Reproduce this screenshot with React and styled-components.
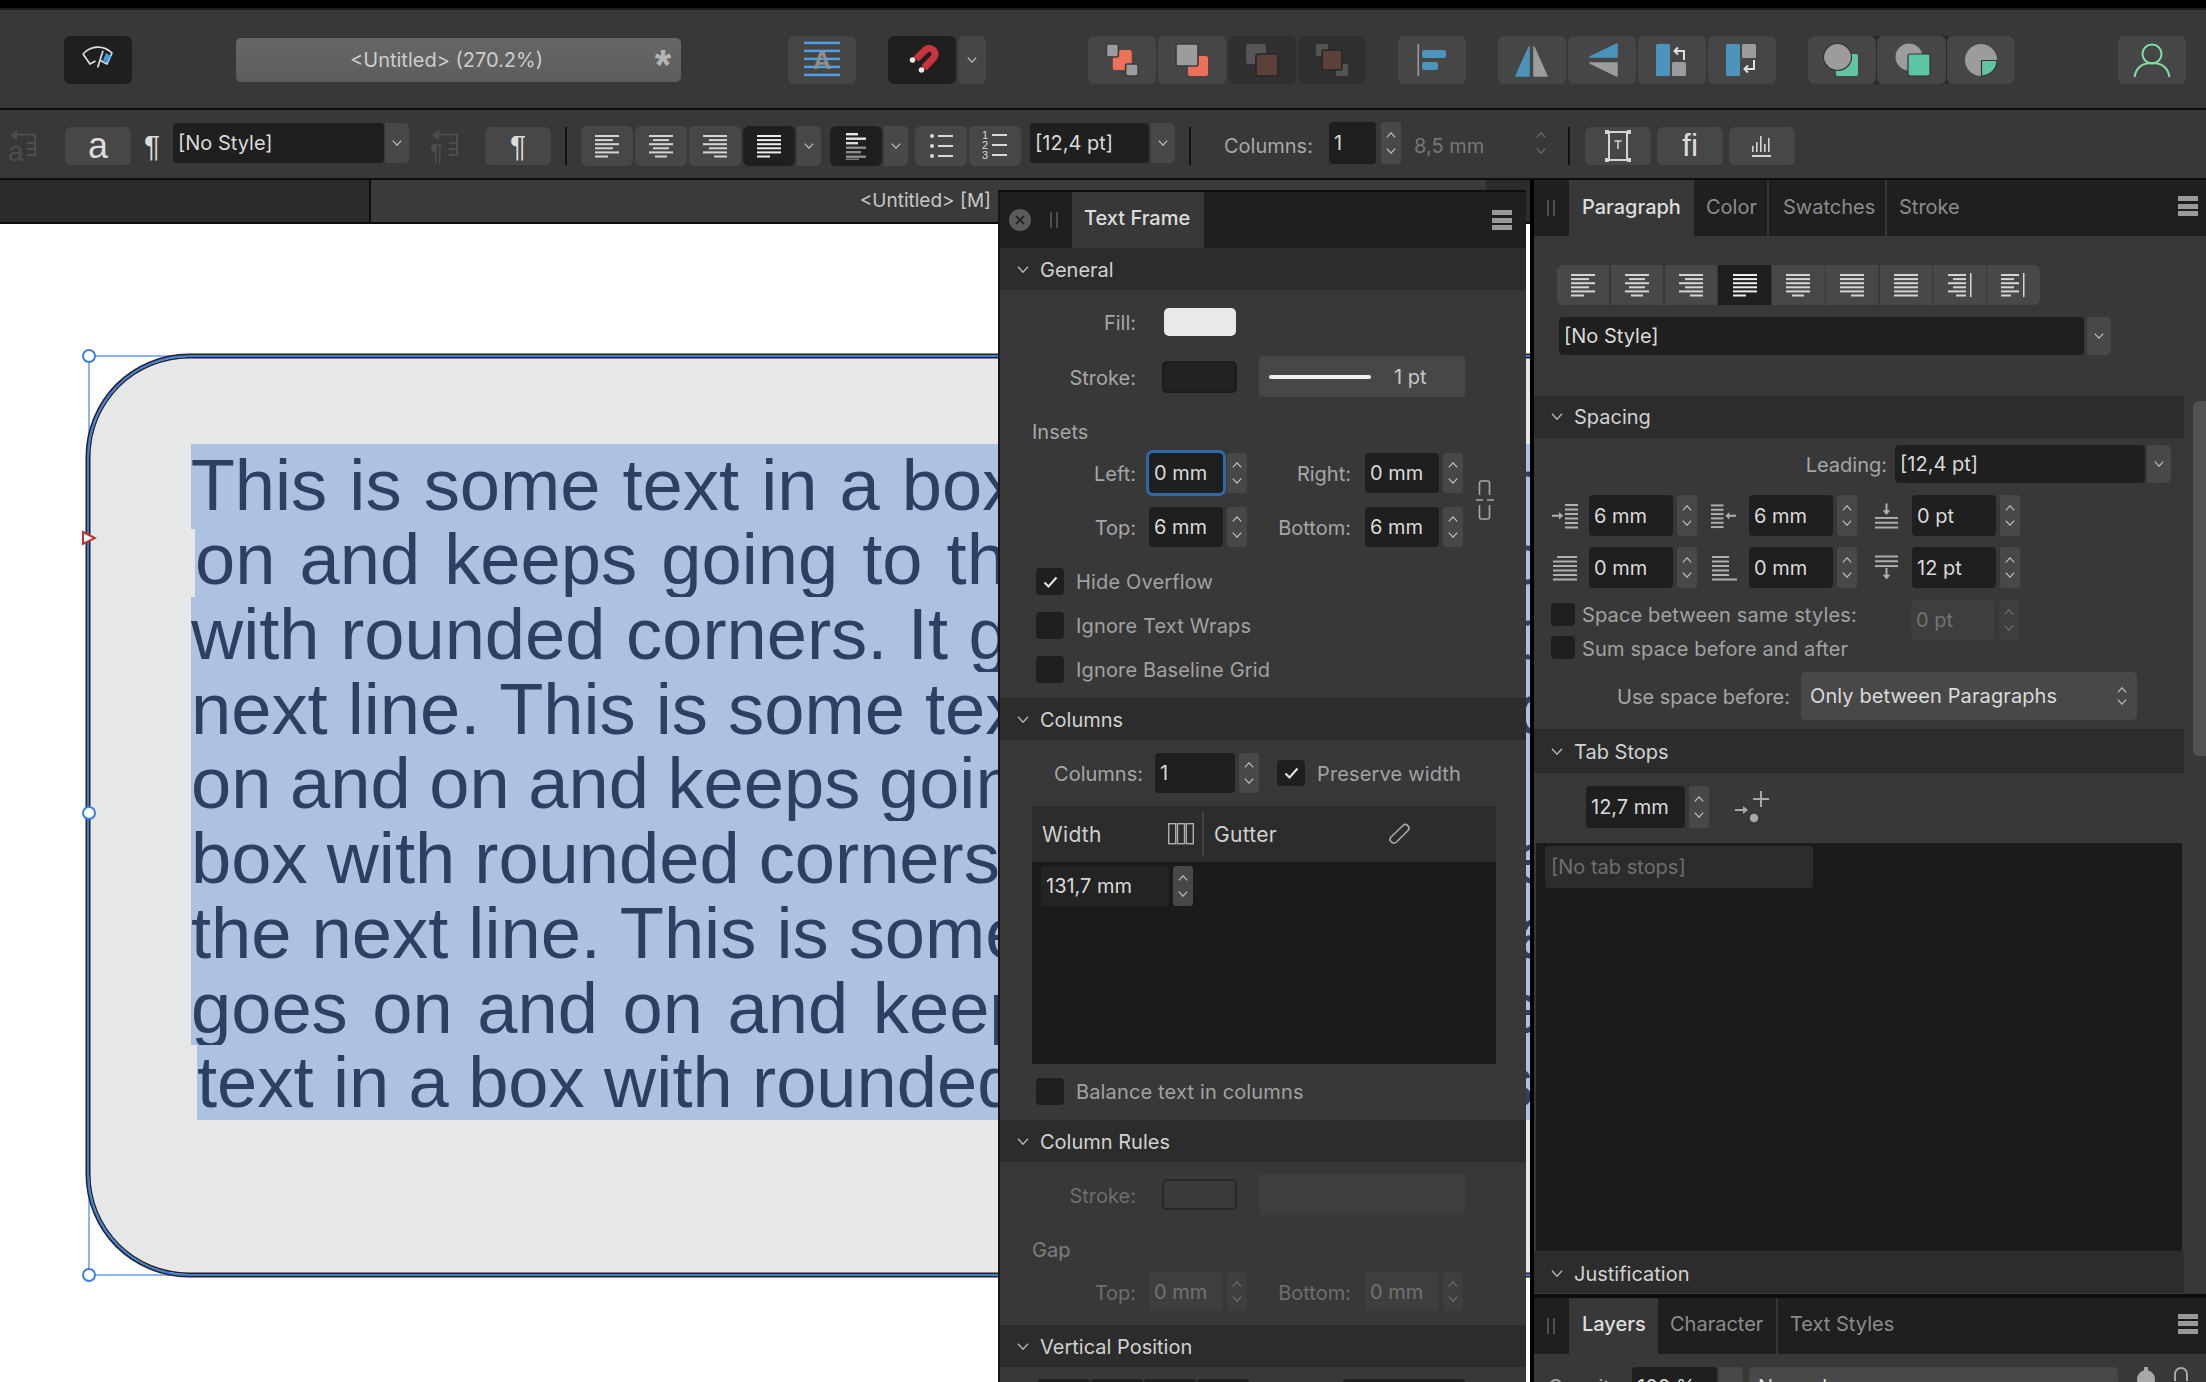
import * as React from "react";
import styled, { createGlobalStyle, css } from "styled-components";

const Global = createGlobalStyle`
  html, body { margin: 0; padding: 0; background: #000; }
  body { width: 2206px; height: 1382px; overflow: hidden; font-family: Inter, "Liberation Sans", sans-serif; }
  * { box-sizing: border-box; }
`;

const ml = css`margin-left: ${(p) => p.$ml || 0}px;`;

const Page = styled.div`
  width: 2206px;
  height: 1382px;
  display: flex;
  flex-direction: column;
  overflow: hidden;
  padding-top: 8px;
  background: #000;
`;

/* ---------- top toolbars ---------- */

const TopBar = styled.div`
  height: 102px;
  flex: none;
  display: flex;
  align-items: flex-start;
  padding-top: 26px;
  background: #383838;
  border-top: 2px solid #1c1c1c;
  border-bottom: 2px solid #0e0e0e;
`;

const ToolBtn = styled.div`
  ${ml}
  width: ${(p) => p.$w || 68}px;
  height: 48px;
  flex: none;
  display: flex;
  align-items: center;
  justify-content: center;
  border-radius: 6px;
  color: #c4c4c4;
  background: ${(p) => (p.$tone === "dark" ? "#1f1f1f" : p.$tone === "dim" ? "#303030" : "#464646")};
`;

const TitleBox = styled.div`
  ${ml}
  position: relative;
  width: 445px;
  height: 44px;
  flex: none;
  margin-top: 2px;
  display: flex;
  align-items: center;
  justify-content: center;
  padding-right: 24px;
  border-radius: 5px;
  background: linear-gradient(#676767, #5c5c5c);
  color: #cdcdcd;
  font-size: 20px;
`;

const Star = styled.span`
  position: absolute;
  right: 10px;
  top: 8px;
  color: #b5b5b5;
  font-size: 42px;
  font-weight: 700;
  line-height: 38px;
  font-family: "Liberation Sans", sans-serif;
`;

const BoolGroup = styled.div`
  ${ml}
  display: flex;
  flex: none;
  gap: 1px;
  border-radius: 6px;
  overflow: hidden;
  background: #2a2a2a;
`;

const ContextBar = styled.div`
  height: 70px;
  flex: none;
  display: flex;
  align-items: center;
  padding-top: 3px;
  background: #383838;
  border-bottom: 2px solid #0e0e0e;
  color: #d0d0d0;
`;

const CtxBtn = styled.div`
  ${ml}
  width: ${(p) => p.$w || 52}px;
  height: ${(p) => p.$h || 40}px;
  flex: none;
  display: flex;
  align-items: center;
  justify-content: center;
  border-radius: 6px;
  background: ${(p) => (p.$dark ? "#1f1f1f" : "#474747")};
  color: #dcdcdc;
  font-size: ${(p) => p.$fs || 20}px;
  font-family: "Liberation Sans", sans-serif;
`;

const Pilcrow = styled.span`
  ${ml}
  width: ${(p) => p.$w || "auto"};
  flex: none;
  color: #dcdcdc;
  font-size: 30px;
  font-family: "Liberation Sans", sans-serif;
`;

const Sep = styled.div`
  ${ml}
  width: 2px;
  height: 38px;
  flex: none;
  background: #111;
`;

const BarText = styled.span`
  ${ml}
  flex: none;
  width: ${(p) => (p.$w ? `${p.$w}px` : "auto")};
  line-height: ${(p) => p.$lh || "normal"};
  color: ${(p) => p.$c || "#a8a8a8"};
  font-size: 20px;
`;

const IconSlot = styled.div`
  ${ml}
  flex: none;
  display: flex;
  align-items: center;
`;

/* ---------- shared controls ---------- */

const Field = styled.div`
  ${ml}
  width: ${(p) => p.$w}px;
  height: ${(p) => p.$h || 40}px;
  flex: none;
  display: flex;
  align-items: center;
  padding-left: 5px;
  border-radius: 4px;
  font-size: 20px;
  white-space: nowrap;
  background: ${(p) => (p.$off ? "#3e3e3e" : p.$bg || "#1f1f1f")};
  color: ${(p) => (p.$off ? "#727272" : "#dadada")};
  ${(p) => p.$focus && "outline: 3px solid #2f6aa8; outline-offset: 0;"}
  ${(p) => p.$up && "margin-bottom: 5px;"}
`;

const Arrows = styled.div`
  ${ml}
  width: ${(p) => p.$w || 20}px;
  height: ${(p) => p.$h || 40}px;
  flex: none;
  display: flex;
  flex-direction: column;
  align-items: center;
  justify-content: space-evenly;
  border-radius: 3px;
  background: ${(p) => (p.$bare ? "transparent" : p.$off ? "#3e3e3e" : "#484848")};
  color: ${(p) => (p.$off ? "#6f6f6f" : "#c4c4c4")};
  ${(p) => p.$up && "margin-bottom: 5px;"}
`;

const DropBtn = styled.div`
  ${ml}
  width: ${(p) => p.$w || 24}px;
  height: ${(p) => p.$h || 40}px;
  flex: none;
  display: flex;
  align-items: center;
  justify-content: center;
  border-radius: 0 5px 5px 0;
  background: #484848;
  color: #c4c4c4;
  ${(p) => p.$up && "margin-bottom: 5px;"}
`;

const Chev = ({ up, w = 10 }) => (
  <svg width={w} height={w * 0.6} viewBox="0 0 10 6" fill="none" stroke="currentColor" strokeWidth="1.1">
    <path d={up ? "M.8 5.4 5 .8l4.2 4.6" : "M.8.6 5 5.2 9.2.6"} />
  </svg>
);

const Stepper = (props) => (
  <Arrows {...props}>
    <Chev up />
    <Chev />
  </Arrows>
);

const Dropdown = (props) => (
  <DropBtn {...props}>
    <Chev />
  </DropBtn>
);

const Burger = styled.div`
  ${ml}
  width: 20px;
  height: 20px;
  flex: none;
  margin-left: auto;
  background: repeating-linear-gradient(#9a9a9a 0 5px, transparent 5px 7.5px);
`;

const Grip = styled.div`
  ${ml}
  width: 8px;
  height: 16px;
  flex: none;
  border-left: 2px solid #4f4f4f;
  border-right: 2px solid #4f4f4f;
`;

const TabRow = styled.div`
  height: 56px;
  flex: none;
  display: flex;
  align-items: stretch;
  padding-right: 8px;
  background: #1f1f1f;
`;

const GripCell = styled.div`
  width: 35px;
  flex: none;
  display: flex;
  align-items: center;
  padding-left: 13px;
`;

const Tab = styled.div`
  width: ${(p) => p.$w}px;
  flex: none;
  display: flex;
  align-items: center;
  padding-left: ${(p) => p.$pl || 13}px;
  padding-bottom: ${(p) => p.$pb ?? 3}px;
  font-size: 20px;
  font-weight: ${(p) => (p.$active ? 500 : 400)};
  background: ${(p) => (p.$active ? "#383838" : "transparent")};
  color: ${(p) => (p.$active ? "#dedede" : "#8c8c8c")};
  ${(p) => p.$line && "border-right: 2px solid #353535;"}
`;

const BurgerCell = styled.div`
  margin-left: auto;
  display: flex;
  align-items: center;
  padding-bottom: 4px;
`;

const SectionBar = styled.div`
  height: ${(p) => p.$h || 42}px;
  display: flex;
  align-items: center;
  gap: 11px;
  padding-left: ${(p) => p.$pl || 17}px;
  padding-top: ${(p) => p.$pt ?? 1}px;
  background: #2c2c2c;
  color: #d2d2d2;
  font-size: 20px;
  svg { color: #b8b8b8; }
`;

const Section = ({ title, ...rest }) => (
  <SectionBar {...rest}>
    <Chev w={12} />
    {title}
  </SectionBar>
);

const Label = styled.div`
  ${ml}
  width: ${(p) => p.$w}px;
  flex: none;
  padding-top: 2px;
  text-align: right;
  white-space: nowrap;
  font-size: 20px;
  color: ${(p) => (p.$off ? "#6e6e6e" : "#a6a6a6")};
`;

const Heading = styled.div`
  height: 24px;
  margin-top: ${(p) => p.$mt || 0}px;
  padding-left: 32px;
  font-size: 20px;
  line-height: 24px;
  color: ${(p) => (p.$off ? "#7e7e7e" : "#a6a6a6")};
`;

const Row = styled.div`
  ${ml}
  display: flex;
  align-items: ${(p) => p.$align || "center"};
  height: ${(p) => p.$h || 40}px;
  margin-top: ${(p) => p.$mt || 0}px;
`;

const CheckBox = styled.div`
  ${ml}
  width: ${(p) => p.$w || 28}px;
  height: ${(p) => p.$h || 27}px;
  flex: none;
  display: flex;
  align-items: center;
  justify-content: center;
  border-radius: 4px;
  background: #1f1f1f;
  color: #e8e8e8;
`;

const CheckText = styled.span`
  margin-left: ${(p) => p.$gap || 12}px;
  padding-top: 1px;
  font-size: 20px;
  letter-spacing: 0.15px;
  white-space: nowrap;
  color: #a2a2a2;
`;

const Tick = () => (
  <svg width="15" height="12" viewBox="0 0 15 12" fill="none" stroke="currentColor" strokeWidth="2">
    <path d="M1.5 6.5 5.5 10.5 13.5 1.5" />
  </svg>
);

/* ---------- document area ---------- */

const Body = styled.div`
  flex: 1;
  display: flex;
  min-height: 0;
`;

const Main = styled.div`
  position: relative;
  width: 1530px;
  flex: none;
  display: flex;
  flex-direction: column;
  overflow: hidden;
  margin-right: 4px;
`;

const DocTabs = styled.div`
  height: 44px;
  flex: none;
  display: flex;
  border-bottom: 2px solid #0e0e0e;
  font-size: 19px;
  color: #c8c8c8;
`;

const DocTabBlank = styled.div`
  width: ${(p) => p.$w}px;
  flex: none;
  background: #2b2b2b;
  ${(p) => p.$line && "border-right: 2px solid #0e0e0e;"}
`;

const DocTabActive = styled.div`
  flex: 1;
  padding: 9px 495px 0 0;
  text-align: right;
  background: #3a3a3a;
`;

const Canvas = styled.div`
  position: relative;
  z-index: 0;
  flex: 1;
  overflow: hidden;
  background: #fff;
`;

const BBox = styled.div`
  position: absolute;
  left: 88px;
  top: 131px;
  width: 200px;
  height: 921px;
  border: 2px solid #8fb4ee;
  border-right: 0;
`;

const Frame = styled.div`
  position: absolute;
  left: 87px;
  top: 131px;
  width: 1800px;
  height: 921px;
  border: 2px solid #3c7ee2;
  border-radius: 102px;
  background: #e6e7e7;
  box-shadow: 0 0 0 1.5px #222, inset 0 0 0 1.5px #222;
`;

const Handle = styled.div`
  position: absolute;
  left: 82px;
  top: ${(p) => p.$y - 7}px;
  width: 14px;
  height: 14px;
  border: 2.5px solid #3c7ee2;
  border-radius: 50%;
  background: #fff;
`;

const Flow = styled.svg`
  position: absolute;
  left: 81px;
  top: 306px;
`;

const TextBlock = styled.div`
  position: absolute;
  left: 0;
  top: 220px;
  display: flex;
  flex-direction: column;
  align-items: flex-start;
  font-family: "Liberation Sans", Arial, sans-serif;
  font-size: 72.3px;
  line-height: 74.7px;
  color: #2c4063;
`;

const TextLine = styled.div`
  margin-left: ${(p) => p.$x}px;
  white-space: pre;
  word-spacing: ${(p) => p.$ws || 0}px;
  background: #adc2e3;
  ${(p) => p.$first && "position: relative; z-index: 1; padding-top: 3.6px; padding-bottom: 7px; margin-bottom: -7px;"}
`;

/* ---------- floating text frame panel ---------- */

const FloatPanel = styled.div`
  position: absolute;
  z-index: 2;
  left: 998px;
  top: 10px;
  width: 528px;
  height: 1192px;
  overflow: hidden;
  border-top: 2px solid #0e0e0e;
  border-left: 2px solid #161616;
  background: #383838;
`;

const TitleRow = styled.div`
  height: 56px;
  display: flex;
  align-items: center;
  padding-right: 14px;
  background: #1f1f1f;
`;

const CloseDot = styled.div`
  margin-left: 9px;
  width: 22px;
  height: 22px;
  flex: none;
  display: flex;
  align-items: center;
  justify-content: center;
  border-radius: 50%;
  background: #5c5c5c;
  color: #262626;
`;

const TitleTab = styled.div`
  margin-left: 14px;
  width: 132px;
  height: 56px;
  flex: none;
  display: flex;
  align-items: center;
  padding: 0 0 4px 12px;
  background: #383838;
  color: #dedede;
  font-size: 20px;
  font-weight: 500;
`;

const Swatch = styled.div`
  ${ml}
  width: ${(p) => p.$w}px;
  height: ${(p) => p.$h}px;
  flex: none;
  border-radius: 5px;
  background: ${(p) => p.$bg};
  ${(p) => p.$bd && `border: 2px solid ${p.$bd};`}
`;

const StrokeBox = styled.div`
  margin-left: 22px;
  width: 206px;
  height: ${(p) => p.$h || 41}px;
  flex: none;
  display: flex;
  align-items: center;
  gap: 23px;
  padding-left: 10px;
  border-radius: 3px;
  background: ${(p) => p.$bg || "#474747"};
  color: #c8c8c8;
  font-size: 20px;
`;

const StrokeLine = styled.div`
  width: 102px;
  height: 4px;
  border-radius: 2px;
  background: #f2f2f2;
`;

const InsetWrap = styled.div`
  display: flex;
  align-items: center;
  margin-top: 9px;
`;

const InsetRows = styled.div`
  display: flex;
  flex-direction: column;
  gap: 14px;
`;

const ColTable = styled.div`
  margin: 13px 0 0 32px;
  width: 464px;
  background: #1b1b1b;
  height: 258px;
`;

const ColHead = styled.div`
  height: 56px;
  display: flex;
  align-items: center;
  background: #2c2c2c;
  color: #d0d0d0;
  font-size: 21px;
  letter-spacing: 0.3px;
`;

const ColTitle = styled.span`
  width: ${(p) => p.$w}px;
  flex: none;
  padding-left: 10px;
`;

const ColDivider = styled.div`
  width: 2px;
  height: 44px;
  margin-left: 8px;
  flex: none;
  background: #454545;
`;

const ColBody = styled.div`
  display: flex;
  padding: 4px 0 0 9px;
  gap: 4px;
`;

const SegRow = styled.div`
  display: flex;
  margin: 12px 0 0 38px;
`;

const SegBtn = styled.div`
  width: ${(p) => p.$w || 52}px;
  height: 40px;
  flex: none;
  margin-right: 1px;
  border-radius: 3px;
  background: ${(p) => (p.$bg ? p.$bg : "#1f1f1f")};
`;

/* ---------- right studio ---------- */

const Studio = styled.div`
  width: 672px;
  flex: none;
  display: flex;
  flex-direction: column;
  background: #383838;
`;

const Upper = styled.div`
  height: 1058px;
  flex: none;
  display: flex;
  overflow: hidden;
`;

const UpperColumn = styled.div`
  width: 650px;
  flex: none;
`;

const ScrollThumb = styled.div`
  margin: 165px 0 0 9px;
  width: 13px;
  height: 355px;
  flex: none;
  border-radius: 6px 0 0 6px;
  background: #525252;
`;

const AlignRow = styled.div`
  margin: 29px 0 0 23px;
  width: 483px;
  display: flex;
  gap: 1.4px;
  border-radius: 6px;
  overflow: hidden;
`;

const AlignCell = styled.div`
  width: 52.4px;
  height: 40px;
  flex: none;
  display: flex;
  align-items: center;
  justify-content: center;
  background: ${(p) => (p.$dark ? "#1f1f1f" : "#484848")};
`;

const ParaStyle = styled.div`
  display: flex;
  height: 38px;
  margin: 12px 0 41px 25px;
`;

const SelectBox = styled.div`
  ${ml}
  width: ${(p) => p.$w}px;
  height: ${(p) => p.$h || 48}px;
  flex: none;
  display: flex;
  align-items: center;
  justify-content: space-between;
  padding: 0 10px 0 9px;
  border-radius: 5px;
  background: #484848;
  color: #dadada;
  font-size: 20px;
  letter-spacing: 0.1px;
`;

const UpDown = styled.div`
  display: flex;
  flex-direction: column;
  gap: 6px;
  color: #c4c4c4;
`;

const SpaceRow = styled.div`
  display: flex;
  align-items: center;
  margin: ${(p) => p.$mt}px 0 0 17px;
`;

const GlyphBox = styled.div`
  ${ml}
  width: ${(p) => p.$w}px;
  flex: none;
  display: flex;
  justify-content: center;
`;

const OptionRow = styled.div`
  display: flex;
  align-items: flex-start;
  height: ${(p) => p.$h}px;
  margin: ${(p) => p.$mt}px 0 0 17px;
`;

const OptionCell = styled.div`
  width: 360px;
  flex: none;
  display: flex;
  align-items: center;
  padding-top: 2px;
`;

const StopsBody = styled.div`
  height: 70px;
  display: flex;
  align-items: flex-start;
  padding: 13px 0 0 52px;
`;

const StopsList = styled.div`
  height: 408px;
  margin-left: 2px;
  width: 646px;
  padding: 3px 9px;
  background: #1b1b1b;
`;

const StopsEmpty = styled.div`
  width: 268px;
  height: 42px;
  display: flex;
  align-items: center;
  padding-left: 6px;
  border-radius: 3px;
  background: #2c2c2c;
  color: #6f6f6f;
  font-size: 20px;
`;

const Divider = styled.div`
  height: 4px;
  flex: none;
  background: #0e0e0e;
`;

const LayerTools = styled.div`
  display: flex;
  align-items: flex-start;
  padding: 13px 0 0 14px;
  overflow: hidden;
  flex: 1;
  color: #dadada;
  font-size: 20px;
`;

/* ---------- drawings ---------- */

const alignPatterns = {
  left: [[0, 24], [0, 18], [0, 24], [0, 18], [0, 24], [0, 13]],
  center: [[0, 24], [4, 16], [0, 24], [4, 16], [0, 24], [6, 12]],
  right: [[0, 24], [6, 18], [0, 24], [6, 18], [0, 24], [11, 13]],
  justify: [[0, 24], [0, 24], [0, 24], [0, 24], [0, 24], [0, 13]],
  justifyCenter: [[0, 24], [0, 24], [0, 24], [0, 24], [0, 24], [6, 12]],
  justifyRight: [[0, 24], [0, 24], [0, 24], [0, 24], [0, 24], [11, 13]],
  justifyAll: [[0, 24], [0, 24], [0, 24], [0, 24], [0, 24], [0, 24]],
  spineIn: [[0, 18], [5, 13], [0, 18], [5, 13], [0, 18], [8, 10]],
  spineOut: [[0, 18], [0, 13], [0, 18], [0, 13], [0, 18], [0, 10]],
};

const AlignGlyph = ({ kind, color = "#d4d4d4" }) => (
  <svg width="26" height="24" viewBox="0 0 26 24" fill={color}>
    {alignPatterns[kind].map(([x, w], i) => (
      <rect key={i} x={x + 1} y={1 + i * 4.1} width={w} height="2" />
    ))}
    {kind === "spineIn" || kind === "spineOut" ? <rect x="23" y="0" width="1.5" height="24" /> : null}
  </svg>
);

const VAlignGlyph = () => (
  <svg width="26" height="28" viewBox="0 0 26 28">
    <rect x="3" y="1" width="12" height="2.4" fill="#e6e6e6" />
    <rect x="3" y="5.5" width="20" height="2.4" fill="#e6e6e6" />
    <rect x="3" y="10" width="12" height="2.4" fill="#dcdcdc" />
    <rect x="3" y="14.5" width="20" height="2.4" fill="#8c8c8c" />
    <rect x="3" y="19" width="15" height="2.4" fill="#8c8c8c" />
    <rect x="3" y="23.5" width="20" height="2.4" fill="#8c8c8c" />
    <rect x="3" y="26.5" width="13" height="1.5" fill="#777" />
  </svg>
);

const BulletGlyph = () => (
  <svg width="26" height="28" viewBox="0 0 26 28" fill="#d8d8d8">
    {[4, 14, 24].map((y) => (
      <g key={y}>
        <circle cx="4" cy={y} r="2" />
        <rect x="10" y={y - 1} width="15" height="2" />
      </g>
    ))}
  </svg>
);

const NumberGlyph = () => (
  <svg width="28" height="30" viewBox="0 0 28 30" fill="#d8d8d8">
    {[8, 18, 28].map((y, i) => (
      <g key={y}>
        <text x="1" y={y} fontSize="11" fontFamily="Liberation Sans">{i + 1}</text>
        <rect x="11" y={y - 5} width="15" height="2" />
      </g>
    ))}
  </svg>
);

const StyleGlyph = ({ letter, fs = 28 }) => (
  <svg width="32" height="36" viewBox="0 0 32 36" fill="#4d4d4d">
    <path d="M2 7 9 2v3.6h19V28h-2V7.6H9V12z" />
    <text x="0" y="33" fontSize={fs} fontFamily="Liberation Sans">{letter}</text>
    <rect x="19" y="14" width="7" height="2" />
    <rect x="19" y="20" width="7" height="2" />
    <rect x="19" y="26" width="7" height="2" />
  </svg>
);

const IndentGlyph = ({ kind }) => {
  const lines = [0, 1, 2, 3, 4, 5];
  if (kind === "in" || kind === "out") {
    const lineX = kind === "in" ? 14 : 1;
    return (
      <svg width="28" height="26" viewBox="0 0 28 26" fill="#b0b0b0">
        {lines.map((i) => <rect key={i} x={lineX} y={1 + i * 4.5} width="13" height="2" />)}
        {kind === "in" ? <path d="M1 11.8h7V9l4 3.8-4 3.8v-2.8H1z" /> : <path d="M27 11.8h-7V9l-4 3.8 4 3.8v-2.8h7z" />}
      </svg>
    );
  }
  if (kind === "first" || kind === "last") {
    return (
      <svg width="26" height="26" viewBox="0 0 26 26" fill="#b0b0b0">
        {lines.map((i) => (
          <rect
            key={i}
            x={kind === "last" && i < 5 ? 1 : kind === "first" && i === 0 ? 5 : 1}
            y={1 + i * 4.5}
            width={kind === "last" && i < 5 ? 17 : kind === "first" && i === 0 ? 20 : kind === "last" ? 25 : 24}
            height="2"
          />
        ))}
      </svg>
    );
  }
  return (
    <svg width="26" height="28" viewBox="0 0 26 28" fill="#b0b0b0">
      {kind === "before" ? (
        <>
          <path d="M12 1h2v7h3l-4 5-4-5h3z" />
          <rect x="1" y="15" width="24" height="2" />
          <rect x="1" y="20" width="24" height="2" />
          <rect x="1" y="25" width="24" height="2" />
        </>
      ) : (
        <>
          <rect x="1" y="1" width="24" height="2" />
          <rect x="1" y="6" width="24" height="2" />
          <rect x="1" y="11" width="24" height="2" />
          <path d="M12 14h2v7h3l-4 5-4-5h3z" />
        </>
      )}
    </svg>
  );
};

const Logo = () => (
  <svg width="68" height="48" viewBox="0 0 68 48" fill="none" stroke="#dedede" strokeWidth="1.7" strokeLinejoin="round">
    <path d="M19 18C27 9 40 9 48 17L43 28 36.5 24.5M19 18 26 28 31.5 25" />
    <path d="M33.7 31.5 39 14.7" />
    <path d="M39 24 42 17 47 20 43 27z" fill="#3d9fe6" stroke="none" />
  </svg>
);

const TextFlowIcon = () => (
  <svg width="68" height="48" viewBox="0 0 68 48">
    {[6.7, 14.7, 22.7, 30.7, 38.7].map((y) => (
      <rect key={y} x="16" y={y - 1} width="36" height="2.4" fill="#4ba3ee" />
    ))}
    <text x="34" y="33" textAnchor="middle" fontSize="25" fontWeight="700" fontFamily="Liberation Sans" fill="#8e8e8e">A</text>
  </svg>
);

const MagnetIcon = () => (
  <svg width="68" height="48" viewBox="0 0 68 48" fill="none">
    <path d="M28 23 38 13.5C43 9.5 50 16.5 46 21.5L36 32" stroke="#c9353f" strokeWidth="7" />
    <circle cx="24.5" cy="24" r="2.8" fill="#e8e8e8" />
    <circle cx="33.5" cy="34" r="2.8" fill="#e8e8e8" />
  </svg>
);

const Blocks = ({ items }) => (
  <svg width="68" height="48" viewBox="0 0 68 48">
    {items.map(([x, y, w, h, fill, edge], i) => (
      <rect key={i} x={x} y={y} width={w} height={h} rx="2" fill={fill} stroke={edge || "none"} strokeWidth={edge ? 1.6 : 0} />
    ))}
  </svg>
);

const OrderIcon = ({ kind }) => {
  const sets = {
    back: [[24.8, 14, 19, 20, "#ee7059"], [18.4, 8, 12, 13, "#9c9c9c", "#3a3a3a"], [37.6, 28, 12.5, 12, "#9c9c9c", "#3a3a3a"]],
    front: [[30, 20, 20, 20, "#ee7059"], [18, 8, 22, 22, "#9c9c9c", "#3a3a3a"]],
    fwd: [[18, 8, 20, 20, "#555"], [28, 18, 22, 22, "#5c403a", "#262626"]],
    bwd: [[18, 8, 12, 12, "#555"], [38, 28, 12, 12, "#555"], [24, 14, 20, 20, "#5c403a", "#262626"]],
  };
  return <Blocks items={sets[kind]} />;
};

const AlignTool = () => (
  <svg width="68" height="48" viewBox="0 0 68 48">
    <rect x="19.5" y="8" width="1.5" height="32" fill="#9c9c9c" />
    <rect x="24" y="14" width="24" height="8" rx="2" fill="#4d94bd" />
    <rect x="24" y="26" width="16" height="8" rx="2" fill="#4d94bd" />
  </svg>
);

const FlipH = () => (
  <svg width="68" height="48" viewBox="0 0 68 48" strokeLinejoin="round">
    <path d="M31 11V40H18z" fill="#4d94bd" stroke="#4d94bd" strokeWidth="1.5" />
    <path d="M36 11V40H49z" fill="#9c9c9c" stroke="#9c9c9c" strokeWidth="1.5" />
  </svg>
);

const FlipV = () => (
  <svg width="68" height="48" viewBox="0 0 68 48" strokeLinejoin="round">
    <path d="M49 8V21H22z" fill="#4d94bd" stroke="#4d94bd" strokeWidth="1.5" />
    <path d="M49 40V27H22z" fill="#9c9c9c" stroke="#9c9c9c" strokeWidth="1.5" />
  </svg>
);

const RotateA = () => (
  <svg width="68" height="48" viewBox="0 0 68 48" fill="none">
    <rect x="18" y="8" width="14" height="32" rx="1.5" fill="#4d94bd" />
    <rect x="34" y="26" width="14" height="14" rx="1.5" fill="#9c9c9c" />
    <path d="M46 24V15H37M40 11.5 36.5 15 40 18.5" stroke="#e0e0e0" strokeWidth="2" />
  </svg>
);

const RotateB = () => (
  <svg width="68" height="48" viewBox="0 0 68 48" fill="none">
    <rect x="18" y="8" width="14" height="32" rx="1.5" fill="#4d94bd" />
    <rect x="34" y="8" width="14" height="14" rx="1.5" fill="#9c9c9c" />
    <path d="M46 24V33H37M40 29.5 36.5 33 40 36.5" stroke="#e0e0e0" strokeWidth="2" />
  </svg>
);

const BoolAdd = () => (
  <svg width="68" height="48" viewBox="0 0 68 48">
    <rect x="28" y="18" width="22" height="22" rx="2" fill="#5fc3a5" />
    <ellipse cx="29.5" cy="21" rx="14" ry="13.5" fill="#9c9c9c" stroke="#333" strokeWidth="1.2" />
  </svg>
);

const BoolSub = () => (
  <svg width="68" height="48" viewBox="0 0 68 48">
    <ellipse cx="31" cy="21" rx="13.5" ry="13.5" fill="#9c9c9c" />
    <rect x="30" y="18" width="22" height="22" rx="2" fill="#5fc3a5" stroke="#333" strokeWidth="1.2" />
  </svg>
);

const BoolCut = () => (
  <svg width="68" height="48" viewBox="0 0 68 48">
    <ellipse cx="34" cy="24" rx="16" ry="16" fill="#9c9c9c" />
    <path d="M34.5 24.5H50C50 33 44 39 34.5 40z" fill="#5fc3a5" stroke="#333" strokeWidth="1.2" />
  </svg>
);

const UserIcon = () => (
  <svg width="68" height="48" viewBox="0 0 68 48" fill="none" stroke="#7de0a0" strokeWidth="2">
    <ellipse cx="34" cy="18" rx="9.5" ry="9.5" />
    <path d="M16.5 41C18 32 24 27 34 27s16 5 17.5 14" />
  </svg>
);

const FrameGlyph = () => (
  <svg width="28" height="34" viewBox="0 0 28 34" fill="none" stroke="#d4d4d4" strokeWidth="2">
    <path d="M5 3V31M23 3V31M3 3H25M3 31H25" />
    <rect x="1" y="1" width="4" height="4" fill="#d4d4d4" stroke="none" />
    <rect x="23" y="1" width="4" height="4" fill="#d4d4d4" stroke="none" />
    <rect x="1" y="29" width="4" height="4" fill="#d4d4d4" stroke="none" />
    <rect x="23" y="29" width="4" height="4" fill="#d4d4d4" stroke="none" />
    <path d="M10.5 12H17.5M14 12V20" strokeWidth="1.5" />
  </svg>
);

const ChartGlyph = () => (
  <svg width="22" height="24" viewBox="0 0 22 24" fill="#d4d4d4">
    {[[1, 12], [5, 8], [9, 2], [13, 10], [17, 4]].map(([x, y]) => (
      <rect key={x} x={x} y={y} width="1.6" height={18 - y} />
    ))}
    <rect x="1" y="21" width="19" height="2" />
  </svg>
);

const LinkGlyph = () => (
  <svg width="18" height="40" viewBox="0 0 18 40" fill="none" stroke="#a8a8a8" strokeWidth="1.6">
    <path d="M3.5 15V3a2 2 0 0 1 2-2h6a2 2 0 0 1 2 2v12M3.5 25v12a2 2 0 0 0 2 2h6a2 2 0 0 0 2-2V25" />
    <path d="M0 20h7M11 20h7" />
  </svg>
);

const ColumnsGlyph = () => (
  <svg width="26" height="22" viewBox="0 0 26 22" fill="none" stroke="#b0b0b0" strokeWidth="1.4">
    <rect x=".7" y=".7" width="7" height="20" />
    <rect x="9.5" y=".7" width="7" height="20" />
    <rect x="18.3" y=".7" width="7" height="20" />
  </svg>
);

const ClipGlyph = () => (
  <svg width="26" height="24" viewBox="0 0 26 24" fill="none" stroke="#a8a8a8" strokeWidth="1.6">
    <path d="M4 15 16 3.5c3-3 8 1.5 5 5L9.5 20C6 23 1 18.5 4 15z" />
  </svg>
);

const AddStopGlyph = () => (
  <svg width="36" height="42" viewBox="0 0 36 42" fill="#a8a8a8">
    <path d="M1 23h8v-3l5 4-5 4v-3H1z" />
    <circle cx="20" cy="32" r="4.2" />
    <rect x="26" y="5" width="2" height="16" />
    <rect x="19" y="12" width="16" height="2" />
  </svg>
);

const Spin = ({ value, w = 74, h = 40, off, focus, stepMl = 4, ...rest }) => (
  <>
    <Field $w={w} $h={h} $off={off} $focus={focus} {...rest}>{value}</Field>
    <Stepper $ml={stepMl} $h={h} $off={off} />
  </>
);

const textLines = [
  { x: 190.7, ws: 2, text: "This is some text in a box that goes on and on", first: true },
  { x: 195, ws: 4, text: "on and keeps going to the edge of the box and on" },
  { x: 191, ws: 0.5, text: "with rounded corners. It goes on and on to the end" },
  { x: 191, text: "next line. This is some text in a box that goes on" },
  { x: 191, ws: -1.5, text: "on and on and keeps going to the edge of the box" },
  { x: 191, ws: -1, text: "box with rounded corners. It goes on to the next" },
  { x: 191, text: "the next line. This is some text in a box that goes" },
  { x: 191, ws: 4.5, text: "goes on and on and keeps going to the edge of the" },
  { x: 197, ws: -0.7, text: "text in a box with rounded corners. It goes on and" },
];

export default () => (
  <Page>
    <Global />

    <TopBar>
      <ToolBtn $ml={64} $tone="dark"><Logo /></ToolBtn>
      <TitleBox $ml={104}>
        &lt;Untitled&gt; (270.2%)
        <Star>*</Star>
      </TitleBox>
      <ToolBtn $ml={107}><TextFlowIcon /></ToolBtn>
      <ToolBtn $ml={32} $tone="dark"><MagnetIcon /></ToolBtn>
      <ToolBtn $ml={2} $w={28}><Chev /></ToolBtn>
      <ToolBtn $ml={102}><OrderIcon kind="back" /></ToolBtn>
      <ToolBtn $ml={2}><OrderIcon kind="front" /></ToolBtn>
      <ToolBtn $ml={2} $tone="dim"><OrderIcon kind="fwd" /></ToolBtn>
      <ToolBtn $ml={2} $tone="dim"><OrderIcon kind="bwd" /></ToolBtn>
      <ToolBtn $ml={32}><AlignTool /></ToolBtn>
      <ToolBtn $ml={32}><FlipH /></ToolBtn>
      <ToolBtn $ml={2}><FlipV /></ToolBtn>
      <ToolBtn $ml={2}><RotateA /></ToolBtn>
      <ToolBtn $ml={2}><RotateB /></ToolBtn>
      <BoolGroup $ml={32}>
        <ToolBtn $w={68.4}><BoolAdd /></ToolBtn>
        <ToolBtn $w={68.4}><BoolSub /></ToolBtn>
        <ToolBtn $w={68.4}><BoolCut /></ToolBtn>
      </BoolGroup>
      <ToolBtn $ml={103}><UserIcon /></ToolBtn>
    </TopBar>

    <ContextBar>
      <IconSlot $ml={8}><StyleGlyph letter="a" /></IconSlot>
      <CtxBtn $ml={25} $w={66} $h={38} $fs={36}>a</CtxBtn>
      <Pilcrow $ml={13} $w="17px">¶</Pilcrow>
      <Field $ml={12} $w={211} $up>[No Style]</Field>
      <Dropdown $ml={1} $up />
      <IconSlot $ml={21}><StyleGlyph letter="¶" fs={24} /></IconSlot>
      <CtxBtn $ml={23} $w={66} $h={38} $fs={30}>¶</CtxBtn>
      <Sep $ml={14} />
      <CtxBtn $ml={14}><AlignGlyph kind="left" /></CtxBtn>
      <CtxBtn $ml={2}><AlignGlyph kind="center" /></CtxBtn>
      <CtxBtn $ml={2}><AlignGlyph kind="right" /></CtxBtn>
      <CtxBtn $ml={2} $dark><AlignGlyph kind="justify" color="#ececec" /></CtxBtn>
      <Dropdown $ml={2} />
      <CtxBtn $ml={9} $dark><VAlignGlyph /></CtxBtn>
      <Dropdown $ml={2} />
      <CtxBtn $ml={7}><BulletGlyph /></CtxBtn>
      <CtxBtn $ml={2}><NumberGlyph /></CtxBtn>
      <Field $ml={9} $w={119} $up>[12,4 pt]</Field>
      <Dropdown $ml={2} $up />
      <Sep $ml={14} />
      <BarText $ml={33} $w={90}>Columns:</BarText>
      <Field $ml={15} $w={47} $h={42} $up>1</Field>
      <Stepper $ml={5} $h={42} $up />
      <BarText $ml={13} $w={117} $c="#777">8,5 mm</BarText>
      <Stepper $bare $off $h={42} $up />
      <Sep $ml={17} />
      <CtxBtn $ml={15} $w={66} $h={38}><FrameGlyph /></CtxBtn>
      <CtxBtn $ml={6} $w={66} $h={38} $fs={32}>fi</CtxBtn>
      <CtxBtn $ml={6} $w={66} $h={38}><ChartGlyph /></CtxBtn>
    </ContextBar>

    <Body>
      <Main>
        <DocTabs>
          <DocTabBlank $w={371} $line />
          <DocTabActive>&lt;Untitled&gt; [M]</DocTabActive>
          <DocTabBlank $w={44} />
        </DocTabs>

        <Canvas>
          <BBox />
          <Frame />
          <TextBlock>
            {textLines.map((l, i) => (
              <TextLine key={i} $x={l.x} $ws={l.ws} $first={l.first}>{l.text}</TextLine>
            ))}
          </TextBlock>
          <Handle $y={132} />
          <Handle $y={589} />
          <Handle $y={1051} />
          <Flow width="16" height="16" viewBox="0 0 16 16">
            <path d="M2 2 14 8 2 14z" fill="#fff" stroke="#c0322c" strokeWidth="2" />
          </Flow>
        </Canvas>

        <FloatPanel>
          <TitleRow>
            <CloseDot>
              <svg width="10" height="10" viewBox="0 0 10 10" stroke="currentColor" strokeWidth="1.8">
                <path d="M1 1 9 9M9 1 1 9" />
              </svg>
            </CloseDot>
            <Grip $ml={19} />
            <TitleTab>Text Frame</TitleTab>
            <Burger />
          </TitleRow>

          <Section title="General" />
          <Row $mt={18} $h={28}>
            <Label $w={136}>Fill:</Label>
            <Swatch $ml={28} $w={72} $h={28} $bg="#e8e9e9" />
          </Row>
          <Row $mt={20} $h={41}>
            <Label $w={136}>Stroke:</Label>
            <Swatch $ml={26} $w={75} $h={32} $bg="#222" $bd="#1c1c1c" />
            <StrokeBox>
              <StrokeLine />
              1 pt
            </StrokeBox>
          </Row>
          <Heading $mt={23}>Insets</Heading>
          <InsetWrap>
            <InsetRows>
              <Row>
                <Label $w={136}>Left:</Label>
                <Spin value="0 mm" $ml={13} focus />
                <Label $w={104}>Right:</Label>
                <Spin value="0 mm" $ml={14} />
              </Row>
              <Row>
                <Label $w={136}>Top:</Label>
                <Spin value="6 mm" $ml={13} />
                <Label $w={104}>Bottom:</Label>
                <Spin value="6 mm" $ml={14} />
              </Row>
            </InsetRows>
            <IconSlot $ml={13}><LinkGlyph /></IconSlot>
          </InsetWrap>
          <Row $ml={36} $mt={21} $h={27}>
            <CheckBox><Tick /></CheckBox>
            <CheckText>Hide Overflow</CheckText>
          </Row>
          <Row $ml={36} $mt={17} $h={27}>
            <CheckBox />
            <CheckText>Ignore Text Wraps</CheckText>
          </Row>
          <Row $ml={36} $mt={17} $h={27}>
            <CheckBox />
            <CheckText>Ignore Baseline Grid</CheckText>
          </Row>
          <Row $h={15} />

          <Section title="Columns" />
          <Row $mt={13}>
            <Label $w={143}>Columns:</Label>
            <Spin value="1" $ml={12} w={80} />
            <CheckBox $ml={18} $h={26}><Tick /></CheckBox>
            <CheckText>Preserve width</CheckText>
          </Row>
          <ColTable>
            <ColHead>
              <ColTitle $w={136}>Width</ColTitle>
              <ColumnsGlyph />
              <ColDivider />
              <ColTitle $w={183}>Gutter</ColTitle>
              <ClipGlyph />
            </ColHead>
            <ColBody>
              <Field $w={128} $h={40} $bg="#232323">131,7 mm</Field>
              <Stepper $h={40} />
            </ColBody>
          </ColTable>
          <Row $ml={36} $mt={14} $h={27}>
            <CheckBox />
            <CheckText>Balance text in columns</CheckText>
          </Row>
          <Row $h={15} />

          <Section title="Column Rules" />
          <Row $mt={12} $h={41}>
            <Label $w={136} $off>Stroke:</Label>
            <Swatch $ml={26} $w={75} $h={31} $bg="#3a3a3a" $bd="#272727" />
            <StrokeBox $bg="#3e3e3e" />
          </Row>
          <Heading $mt={23} $off>Gap</Heading>
          <Row $mt={10} $h={39}>
            <Label $w={136} $off>Top:</Label>
            <Spin value="0 mm" $ml={13} h={39} off />
            <Label $w={104} $off>Bottom:</Label>
            <Spin value="0 mm" $ml={14} h={39} off />
          </Row>
          <Row $h={14} />

          <Section title="Vertical Position" />
          <SegRow>
            <SegBtn />
            <SegBtn />
            <SegBtn />
            <SegBtn />
            <SegBtn $w={92} $bg="transparent" />
            <SegBtn $w={122} />
          </SegRow>
        </FloatPanel>
      </Main>

      <Studio>
        <TabRow>
          <GripCell><Grip /></GripCell>
          <Tab $w={125} $active>Paragraph</Tab>
          <Tab $w={75} $pl={12} $line>Color</Tab>
          <Tab $w={118} $pl={14} $line>Swatches</Tab>
          <Tab $w={90} $pl={12}>Stroke</Tab>
          <BurgerCell><Burger /></BurgerCell>
        </TabRow>

        <Upper>
          <UpperColumn>
            <AlignRow>
              <AlignCell><AlignGlyph kind="left" /></AlignCell>
              <AlignCell><AlignGlyph kind="center" /></AlignCell>
              <AlignCell><AlignGlyph kind="right" /></AlignCell>
              <AlignCell $dark><AlignGlyph kind="justify" color="#ececec" /></AlignCell>
              <AlignCell><AlignGlyph kind="justifyCenter" /></AlignCell>
              <AlignCell><AlignGlyph kind="justifyRight" /></AlignCell>
              <AlignCell><AlignGlyph kind="justifyAll" /></AlignCell>
              <AlignCell><AlignGlyph kind="spineIn" /></AlignCell>
              <AlignCell><AlignGlyph kind="spineOut" /></AlignCell>
            </AlignRow>
            <ParaStyle>
              <Field $w={525} $h={38}>[No Style]</Field>
              <Dropdown $ml={3} $h={38} />
            </ParaStyle>

            <Section title="Spacing" $pt={0} />
            <Row $mt={7} $h={38}>
              <Label $w={353}>Leading:</Label>
              <Field $ml={8} $w={250} $h={38}>[12,4 pt]</Field>
              <Dropdown $ml={2} $h={38} />
            </Row>
            <SpaceRow $mt={12}>
              <GlyphBox $w={28}><IndentGlyph kind="in" /></GlyphBox>
              <Spin value="6 mm" $ml={10} w={84} h={41} />
              <GlyphBox $ml={13} $w={27}><IndentGlyph kind="out" /></GlyphBox>
              <Spin value="6 mm" $ml={12} w={84} h={41} />
              <GlyphBox $ml={17} $w={25}><IndentGlyph kind="before" /></GlyphBox>
              <Spin value="0 pt" $ml={13} w={84} h={41} />
            </SpaceRow>
            <SpaceRow $mt={11}>
              <GlyphBox $w={28}><IndentGlyph kind="first" /></GlyphBox>
              <Spin value="0 mm" $ml={10} w={84} h={41} />
              <GlyphBox $ml={13} $w={27}><IndentGlyph kind="last" /></GlyphBox>
              <Spin value="0 mm" $ml={12} w={84} h={41} />
              <GlyphBox $ml={17} $w={25}><IndentGlyph kind="after" /></GlyphBox>
              <Spin value="12 pt" $ml={13} w={84} h={41} />
            </SpaceRow>
            <OptionRow $mt={12} $h={36}>
              <OptionCell>
                <CheckBox $w={24} $h={23} />
                <CheckText $gap={7}>Space between same styles:</CheckText>
              </OptionCell>
              <Spin value="0 pt" w={84} off />
            </OptionRow>
            <OptionRow $mt={0} $h={23}>
              <CheckBox $w={24} $h={23} />
              <CheckText $gap={7}>Sum space before and after</CheckText>
            </OptionRow>
            <Row $mt={13} $h={48}>
              <Label $w={256}>Use space before:</Label>
              <SelectBox $ml={11} $w={336}>
                Only between Paragraphs
                <UpDown><Chev up /><Chev /></UpDown>
              </SelectBox>
            </Row>
            <Row $h={9} />

            <Section title="Tab Stops" $h={44} />
            <StopsBody>
              <Spin value="12,7 mm" w={99} h={42} />
              <IconSlot $ml={25}><AddStopGlyph /></IconSlot>
            </StopsBody>
            <StopsList>
              <StopsEmpty>[No tab stops]</StopsEmpty>
            </StopsList>
            <Section title="Justification" $pt={4} />
          </UpperColumn>
          <ScrollThumb />
        </Upper>

        <Divider />

        <TabRow>
          <GripCell><Grip /></GripCell>
          <Tab $w={89} $pb={4} $active>Layers</Tab>
          <Tab $w={120} $pb={4} $pl={12} $line>Character</Tab>
          <Tab $w={150} $pb={4} $pl={12}>Text Styles</Tab>
          <BurgerCell><Burger /></BurgerCell>
        </TabRow>
        <LayerTools>
          <BarText $w={84} $c="#a6a6a6" $lh="40px">Opacity:</BarText>
          <Field $w={85}>100 %</Field>
          <Dropdown $ml={2} />
          <SelectBox $ml={6} $w={369} $h={40}>
            Normal
            <Chev up />
          </SelectBox>
          <IconSlot $ml={16}>
            <svg width="24" height="24" viewBox="0 0 24 24" fill="#a8a8a8"><circle cx="12" cy="12" r="9" /><rect x="10" y="0" width="4" height="5" /></svg>
          </IconSlot>
          <IconSlot $ml={14}>
            <svg width="18" height="24" viewBox="0 0 18 24" fill="none" stroke="#a8a8a8" strokeWidth="2"><path d="M3 14V7a6 6 0 0 1 12 0v7" /></svg>
          </IconSlot>
        </LayerTools>
      </Studio>
    </Body>
  </Page>
);
